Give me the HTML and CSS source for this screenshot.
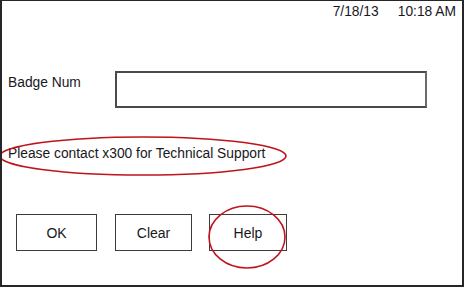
FILE: index.html
```html
<!DOCTYPE html>
<html>
<head>
<meta charset="utf-8">
<link rel="stylesheet" href="styles.css">
</head>
<body>
<div class="screen">
  <div class="topbar"><span>7/18/13</span><span>10:18 AM</span></div>
  <div class="field-row">
    <div class="label">Badge Num</div>
    <div class="input"></div>
  </div>
  <div class="message">
    <span>Please contact x300 for Technical Support</span>
    <svg class="mark mark-msg" width="290" height="42" viewBox="0 0 290 42"><ellipse cx="145" cy="21" rx="143" ry="19" fill="none" stroke="#c0131b" stroke-width="1.6"/></svg>
  </div>
  <div class="buttons">
    <button class="btn btn-ok">OK</button>
    <button class="btn btn-clear">Clear</button>
    <div class="help-wrap">
      <button class="btn btn-help">Help</button>
      <svg class="mark mark-help" width="82" height="66" viewBox="0 0 82 66"><ellipse cx="41" cy="33" rx="38" ry="31" fill="none" stroke="#c0131b" stroke-width="1.6"/></svg>
    </div>
  </div>
</div>
</body>
</html>
```
FILE: styles.css
```css
* { box-sizing: border-box; }
html, body { margin: 0; padding: 0; background: #fff; }
.screen {
  width: 464px;
  height: 287px;
  border: 2px solid #262626;
  border-top-width: 1px;
  font-family: "Liberation Sans", Arial, sans-serif;
  font-size: 13.8px;
  color: #181822;
  position: relative;
  overflow: hidden;
}
.topbar {
  display: flex;
  justify-content: flex-end;
  gap: 19px;
  padding: 3px 6px 0 0;
  line-height: 16px;
}
.field-row {
  display: flex;
  align-items: flex-start;
  margin-top: 51px;
  padding-left: 6px;
}
.label {
  width: 107px;
  padding-top: 4px;
  line-height: 16px;
}
.input {
  width: 312px;
  height: 37px;
  border: 2px solid #4a4a4a;
  border-right-color: #6a6a6a;
}
.message {
  position: relative;
  margin-top: 38px;
  padding-left: 6px;
  line-height: 16px;
}
.mark { position: absolute; pointer-events: none; }
.mark-msg { left: -4px; top: -11px; }
.buttons {
  display: flex;
  margin-top: 52px;
  padding-left: 14px;
  gap: 18px;
}
.btn {
  height: 37px;
  border: 1.5px solid #3c3c3c;
  background: #fff;
  font-family: inherit;
  font-size: 14px;
  color: #181822;
  padding: 0;
}
.btn-ok { width: 81px; }
.btn-clear { width: 77px; margin-right: -1px; }
.btn-help { width: 78px; }
.help-wrap { position: relative; }
.mark-help { left: -3px; top: -10px; }
```
